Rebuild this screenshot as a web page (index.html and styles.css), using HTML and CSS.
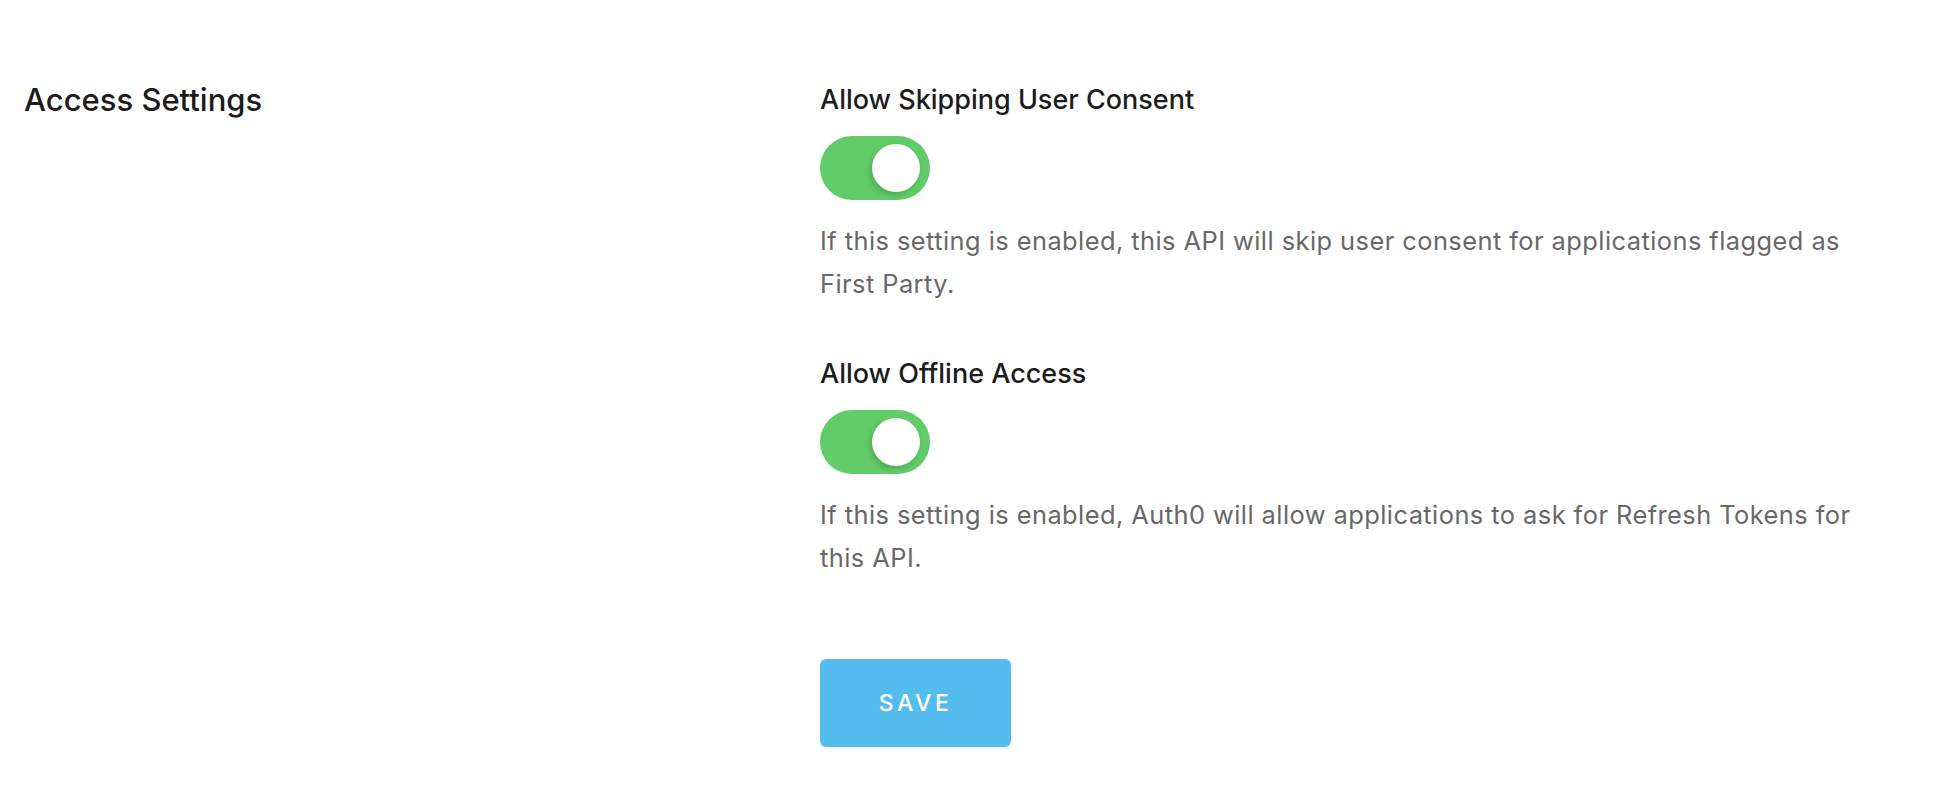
FILE: index.html
```html
<!DOCTYPE html>
<html lang="en">
<head>
  <meta charset="UTF-8" />
  <meta name="viewport" content="width=device-width, initial-scale=1.0"/>
  <title>API Settings</title>
  <link rel="stylesheet" href="styles.css">
</head>
<body>

<section class="settings">
  <h2 class="settings-title">Access Settings</h2>

  <div class="settings-body">
    <!-- Skip consent -->
    <div class="field">
      <label class="field-label" for="skipConsent">Allow Skipping User Consent</label>
      <label class="switch">
        <input type="checkbox" id="skipConsent" checked>
        <span class="slider"></span>
      </label>
      <p class="field-help">If this setting is enabled, this API will skip user consent for applications flagged as First Party.</p>
    </div>

    <!-- Offline access -->
    <div class="field">
      <label class="field-label" for="offlineAccess">Allow Offline Access</label>
      <label class="switch">
        <input type="checkbox" id="offlineAccess" checked>
        <span class="slider"></span>
      </label>
      <p class="field-help">If this setting is enabled, Auth0 will allow applications to ask for Refresh Tokens for this API.</p>
    </div>

    <button class="btn-save" type="button">Save</button>
  </div>
</section>

</body>
</html>
```

FILE: styles.css
```css
:root {
  --text: #1c1c1c;
  --muted: #686868;
  --green: #62cd68;
  --blue: #55bdee;
}

html, body {
  margin: 0;
  padding: 0;
  background: white;
  color: var(--text);
  font-family: Inter, "Liberation Sans", sans-serif;
}

.settings {
  display: grid;
  grid-template-columns: 796px 1fr;
  align-items: start;
  padding: 83px 76px 60px 24px;
}

.settings-title {
  margin: 0;
  font-size: 31px;
  line-height: 34px;
  font-weight: 500;
}

.field {
  margin-bottom: 52px;
}

.field-label {
  display: block;
  font-size: 27px;
  line-height: 34px;
  font-weight: 500;
}

.switch {
  position: relative;
  display: block;
  width: 110px;
  height: 64px;
  margin-top: 19px;
}

.switch input {
  opacity: 0;
  width: 0;
  height: 0;
  margin: 0;
}

.slider {
  position: absolute;
  inset: 0;
  border-radius: 32px;
  background: #ccc;
  cursor: pointer;
  transition: background 0.2s;
}

.slider::before {
  content: "";
  position: absolute;
  top: 8px;
  left: 8px;
  width: 48px;
  height: 48px;
  border-radius: 50%;
  background: white;
  box-shadow: -2px 3px 6px rgba(0, 0, 0, 0.18);
  transition: transform 0.2s;
}

.switch input:checked + .slider {
  background: var(--green);
}

.switch input:checked + .slider::before {
  transform: translateX(44px);
}

.field-help {
  margin: 19px 0 0;
  font-size: 25.4px;
  line-height: 43px;
  letter-spacing: 0.45px;
  color: var(--muted);
}

.btn-save {
  display: block;
  margin-top: 80px;
  width: 191px;
  height: 88px;
  border: none;
  border-radius: 6px;
  background: var(--blue);
  color: white;
  font-family: inherit;
  font-size: 23px;
  font-weight: 500;
  letter-spacing: 3.5px;
  text-transform: uppercase;
  cursor: pointer;
}
```
